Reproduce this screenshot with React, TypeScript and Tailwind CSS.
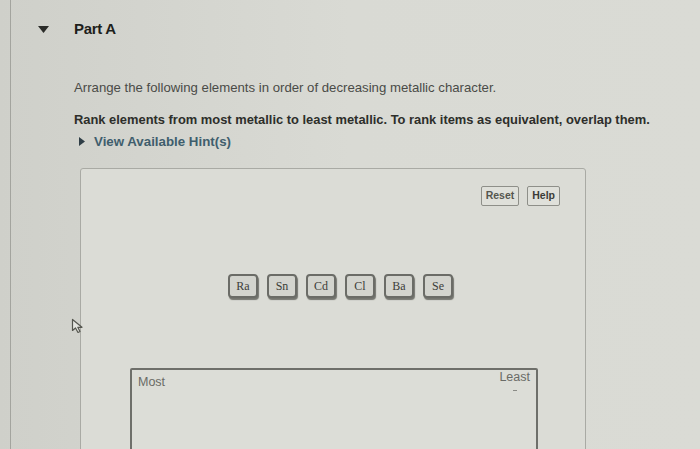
import React from "react";

const elements = ["Ra", "Sn", "Cd", "Cl", "Ba", "Se"];

// Small outlined mouse pointer sitting over the page
const Pointer: React.FC = () => (
  <svg width="14" height="16" viewBox="0 0 14 16" className="absolute left-[71px] top-[318px]">
    <path d="M1.5 1.5 L1.5 12.5 L4.5 10 L7 14.5 L9 13.5 L6.8 9.3 L11 9.3 Z" fill="#e4e5e0" stroke="#55564f" strokeWidth="1.2" strokeLinejoin="round" />
  </svg>
);

const App: React.FC = () => {
  return (
    <div
      className="relative w-[700px] h-[449px] overflow-hidden bg-gradient-to-r from-[#cfd0ca] via-[#d9dad4] to-[#dadbd5] pl-[10px] text-[#3b3c38]"
      style={{ fontFamily: '"Liberation Sans", Arial, sans-serif' }}
    >
      <div className="h-full border-l border-[#a3a49e]">
        {/* Part header */}
        <div className="flex items-center pt-[18px] pl-[27px]">
          <svg width="11" height="7" viewBox="0 0 11 7">
            <path d="M0 0 L11 0 L5.5 7 Z" fill="#2b2c29" />
          </svg>
          <span className="ml-[25px] text-[15px] font-bold tracking-[-0.3px] text-[#1e1f1c]">Part A</span>
        </div>

        {/* Question text */}
        <div className="pl-[63px] pt-[38px]">
          <p className="text-[13.2px] leading-[18px] text-[#4a4b47]">
            Arrange the following elements in order of decreasing metallic character.
          </p>
          <p className="mt-[14px] text-[12.9px] leading-[18px] font-bold text-[#2d2e2a]">
            Rank elements from most metallic to least metallic. To rank items as equivalent, overlap them.
          </p>
          <div className="mt-[4px] flex items-center">
            <svg width="6" height="9" viewBox="0 0 6 9" className="ml-[5px]">
              <path d="M0 0 L6 4.5 L0 9 Z" fill="#2f3e46" />
            </svg>
            <span className="ml-[9px] text-[13.3px] leading-[18px] font-bold text-[#3f5e6d]">View Available Hint(s)</span>
          </div>

          {/* Ranking widget */}
          <div className="mt-[17px] ml-[6px] w-[506px] h-[300px] rounded-[3px] border border-[#a9aaa4] bg-[#dbdcd6]">
            <div className="flex justify-end gap-[8px] pt-[17px] pr-[25px]">
              <button className="h-[20px] px-[4px] rounded-[2px] border border-[#8e8f89] bg-[#dfe0da] text-[10.5px] font-bold text-[#55564f]">
                Reset
              </button>
              <button className="h-[20px] px-[4px] rounded-[2px] border border-[#8e8f89] bg-[#dfe0da] text-[10.5px] font-bold text-[#3a3b37]">
                Help
              </button>
            </div>

            <div className="mt-[68px] ml-[147px] flex gap-[9px]" style={{ fontFamily: '"Liberation Serif", "Times New Roman", serif' }}>
              {elements.map((el) => (
                <div
                  key={el}
                  className="flex h-[24px] w-[30px] items-center justify-center rounded-[4px] border-2 border-[#6b6c67] bg-[#d3d4ce] text-[12px] text-[#3c3d39] shadow-[1px_2px_1px_#74756f]"
                >
                  {el}
                </div>
              ))}
            </div>

            <div className="mt-[70px] ml-[49px] h-[120px] w-[408px] rounded-[2px] border-2 border-[#6e6f6a] bg-[#dcddd7]">
              <div className="flex justify-between px-[6px] text-[12.5px] leading-[14px] text-[#6a6b66]">
                <span className="mt-[5px]">Most</span>
                <div className="flex flex-col items-center">
                  <span>Least</span>
                  <span className="mt-[6px] h-[1px] w-[4px] bg-[#8a8b86]" />
                </div>
              </div>
            </div>
          </div>
        </div>
      </div>
      <Pointer />
    </div>
  );
};

export default App;
